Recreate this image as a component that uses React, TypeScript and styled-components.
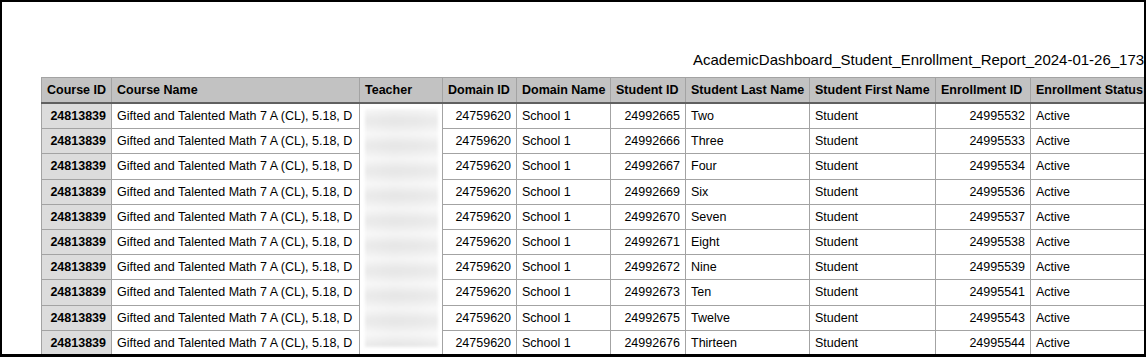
import React from "react";
import styled, { createGlobalStyle } from "styled-components";

const Global = createGlobalStyle`
  html, body { margin: 0; padding: 0; background: #fff; }
  body { font-family: "Liberation Sans", Arial, Helvetica, sans-serif; color: #000; }
`;

const Frame = styled.div`
  box-sizing: border-box;
  width: 1146px;
  height: 357px;
  border: 2px solid #000;
  border-bottom-width: 3px;
  overflow: hidden;
  background: #fff;
`;

const Title = styled.div`
  font-size: 15px;
  line-height: 17px;
  white-space: nowrap;
  margin: 49px 0 0 691px;
`;

const Table = styled.table`
  margin: 9px 0 0 39px;
  border-collapse: collapse;
  table-layout: fixed;
  width: 1110px;
  font-size: 12.5px;
`;

const Th = styled.th`
  background: #c2c2c2;
  font-weight: bold;
  text-align: left;
  white-space: nowrap;
  height: 24px;
  padding: 0 5px;
  border: 1px solid #a3a3a3;
  border-bottom: 2px solid #606060;
  overflow: hidden;
`;

const Td = styled.td<{ $num?: boolean; $key?: boolean }>`
  height: 24.2px;
  padding: 0 5px;
  white-space: nowrap;
  overflow: hidden;
  border: 1px solid #a3a3a3;
  text-align: ${(p) => (p.$num || p.$key ? "right" : "left")};
  font-weight: ${(p) => (p.$key ? "bold" : "normal")};
  background: ${(p) => (p.$key ? "#dcdcdc" : "#fff")};
`;

const TeacherCell = styled.td`
  padding: 5px 4px 0 5px;
  vertical-align: top;
  border: 1px solid #a3a3a3;
  background: #fff;
  overflow: hidden;
`;

const Blur = styled.div`
  height: 238px;
  background:
    repeating-linear-gradient(
      to bottom,
      rgba(255,255,255,0.5) 0px,
      rgba(228,228,228,0.45) 10px,
      rgba(228,228,228,0.45) 14px,
      rgba(255,255,255,0.5) 25px
    ),
    linear-gradient(to right, #f1f1f1 0%, #e9e9e9 40%, #ececec 70%, #f3f3f3 100%);
  filter: blur(1.5px);
`;

const widths = [70, 248, 83, 74, 94, 75, 124, 126, 95, 121];
const headers = [
  "Course ID",
  "Course Name",
  "Teacher",
  "Domain ID",
  "Domain Name",
  "Student ID",
  "Student Last Name",
  "Student First Name",
  "Enrollment ID",
  "Enrollment Status",
];

const rows: [string, string, string][] = [
  ["24992665", "Two", "24995532"],
  ["24992666", "Three", "24995533"],
  ["24992667", "Four", "24995534"],
  ["24992669", "Six", "24995536"],
  ["24992670", "Seven", "24995537"],
  ["24992671", "Eight", "24995538"],
  ["24992672", "Nine", "24995539"],
  ["24992673", "Ten", "24995541"],
  ["24992675", "Twelve", "24995543"],
  ["24992676", "Thirteen", "24995544"],
];

export default function App() {
  return (
    <>
      <Global />
      <Frame>
        <Title>AcademicDashboard_Student_Enrollment_Report_2024-01-26_173</Title>
        <Table>
          <colgroup>
            {widths.map((w, i) => (
              <col key={i} style={{ width: w }} />
            ))}
          </colgroup>
          <thead>
            <tr>
              {headers.map((h) => (
                <Th key={h}>{h}</Th>
              ))}
            </tr>
          </thead>
          <tbody>
            {rows.map(([sid, last, eid], i) => (
              <tr key={sid}>
                <Td $key>24813839</Td>
                <Td>Gifted and Talented Math 7 A (CL), 5.18, D</Td>
                {i === 0 && (
                  <TeacherCell rowSpan={rows.length}>
                    <Blur />
                  </TeacherCell>
                )}
                <Td $num>24759620</Td>
                <Td>School 1</Td>
                <Td $num>{sid}</Td>
                <Td>{last}</Td>
                <Td>Student</Td>
                <Td $num>{eid}</Td>
                <Td>Active</Td>
              </tr>
            ))}
          </tbody>
        </Table>
      </Frame>
    </>
  );
}
